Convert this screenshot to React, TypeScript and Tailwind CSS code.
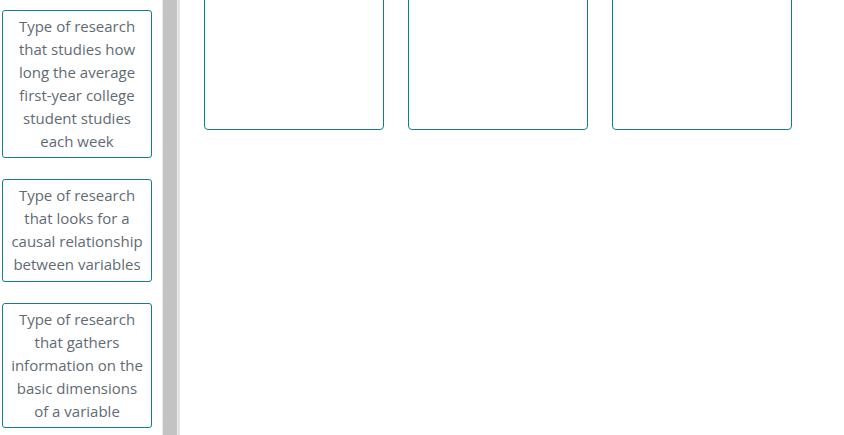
const cards = [
  ['Type of research', 'that studies how', 'long the average', 'first-year college', 'student studies', 'each week'],
  ['Type of research', 'that looks for a', 'causal relationship', 'between variables'],
  ['Type of research', 'that gathers', 'information on the', 'basic dimensions', 'of a variable'],
]

export default function App() {
  return (
    <div className="w-[844px] h-[435px] overflow-hidden bg-white flex font-['Open_Sans','Lato',sans-serif]">
      {/* Source cards */}
      <div className="w-[162px] shrink-0 pl-[2px] pt-[10px] flex flex-col">
        {cards.map((lines, i) => (
          <div
            key={i}
            className={`w-[150px] border border-[#127e8e] rounded-[3px] pt-[4px] pb-[4px] text-center text-[15px] leading-[23px] text-[#5f6b74] ${i === 1 ? 'mt-[21px] pb-[5px]' : ''} ${i === 2 ? 'mt-[21px]' : ''}`}
          >
            {lines.map((l, j) => (
              <div key={j}>{l}</div>
            ))}
          </div>
        ))}
      </div>

      {/* Divider / scrollbar */}
      <div className="w-[18px] shrink-0 h-full flex">
        <div className="w-[1px] bg-[#ececec]" />
        <div className="w-[14px] bg-[#c3c3c3]" />
        <div className="w-[1px] bg-[#ececec]" />
        <div className="w-[2px] bg-[#dde3e6]" />
      </div>

      {/* Drop zones */}
      <div className="flex-1 pl-[24px] flex items-start gap-[24px]">
        {[0, 1, 2].map((i) => (
          <div
            key={i}
            className="w-[180px] h-[140px] -mt-[10px] border border-[#127e8e] rounded-[4px]"
          />
        ))}
      </div>
    </div>
  )
}
